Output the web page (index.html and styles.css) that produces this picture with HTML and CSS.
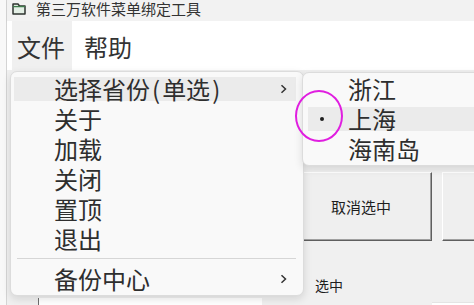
FILE: index.html
```html
<!DOCTYPE html>
<html lang="zh-CN">
<head>
  <meta charset="UTF-8" />
  <title>第三万软件菜单绑定工具</title>
  <link rel="stylesheet" href="styles.css">
</head>
<body>
  <div class="app">
    <header class="titlebar">
      <svg class="app-icon" viewBox="0 0 14 12" width="14" height="12">
        <path d="M1 1 H6 L7.5 3 H13 V11 H1 Z" fill="#e3efe5" stroke="#2f3430" stroke-width="1.5" stroke-linejoin="round" />
        <path d="M1 3.6 H13" stroke="#3f7a4c" stroke-width="1.3" />
      </svg>
      <span class="title">第三万软件菜单绑定工具</span>
    </header>

    <nav class="menubar">
      <span class="menu-item open">文件</span>
      <span class="menu-item">帮助</span>
    </nav>

    <main class="client">
      <div class="btn btn-clear">取消选中</div>
      <div class="btn btn-next"></div>
      <div class="label">选中</div>
      <div class="input input-left"></div>
      <div class="input input-right"></div>
    </main>
  </div>

  <!-- 文件 菜单 -->
  <div class="dropdown">
    <div class="item active">
      <span class="text">选择省份<span class="paren">(</span>单选<span class="paren">)</span></span>
      <svg class="chevron" viewBox="0 0 7 10" width="7" height="10"><path d="M1.5 1.2 L5.5 5 L1.5 8.8" /></svg>
    </div>
    <div class="item"><span class="text">关于</span></div>
    <div class="item"><span class="text">加载</span></div>
    <div class="item"><span class="text">关闭</span></div>
    <div class="item"><span class="text">置顶</span></div>
    <div class="item"><span class="text">退出</span></div>
    <div class="separator"></div>
    <div class="item">
      <span class="text">备份中心</span>
      <svg class="chevron" viewBox="0 0 7 10" width="7" height="10"><path d="M1.5 1.2 L5.5 5 L1.5 8.8" /></svg>
    </div>
  </div>

  <!-- 省份 子菜单 -->
  <div class="submenu">
    <div class="sub-item"><span class="check"></span><span class="text">浙江</span></div>
    <div class="sub-item active"><span class="check on"></span><span class="text">上海</span></div>
    <div class="sub-item"><span class="check"></span><span class="text">海南岛</span></div>
  </div>

  <div class="mark"></div>
</body>
</html>
```

FILE: styles.css
```css
:root {
  --menu-font: "Noto Sans CJK SC", "Noto Sans", sans-serif;
  --ui-font: "Noto Sans CJK SC", "Noto Sans", sans-serif;
  --text: #2e2e2e;
  --menu-bg: #f9f9f9;
  --menu-border: #dcdcdc;
  --hover: #ebebeb;
  --face: #f0f0f0;
}

* {
  box-sizing: border-box;
}

body {
  margin: 0;
  width: 474px;
  height: 305px;
  overflow: hidden;
  position: relative;
  background: #f8f8f8;
  color: var(--text);
  font-family: var(--ui-font);
}

.app {
  margin-left: 6px;
  height: 305px;
  border-left: 1px solid #d4d4d4;
  display: flex;
  flex-direction: column;
}

.titlebar {
  height: 21px;
  display: flex;
  align-items: flex-start;
  gap: 10px;
  padding: 1px 0 0 5px;
  background: #f2f2f2;
  box-shadow: 0 1px 2px rgba(0, 0, 0, 0.04);
}

.app-icon {
  margin-top: 2px;
  flex: none;
}

.title {
  font-size: 15px;
  line-height: 16px;
  color: #333;
  white-space: nowrap;
}

.menubar {
  height: 49px;
  display: flex;
  gap: 7px;
  padding-left: 5px;
  background: #fff;
}

.menu-item {
  display: flex;
  align-items: center;
  padding: 3px 7px 0 5px;
  font-family: var(--menu-font);
  font-size: 24px;
  line-height: 26px;
  color: #333;
}

.menu-item.open {
  background: #f0f0f0;
}

.client {
  flex: 1;
  background: var(--face);
  display: grid;
  grid-template-columns: 31px 224px 28px 142px 10px 1fr;
  grid-template-rows: 69px 57px 1fr;
  padding-top: 102px;
}

.btn {
  grid-row: 1;
  background: #efefef;
  border: 1px solid;
  border-color: #ffffff #5f5f5f #5f5f5f #ffffff;
  box-shadow: inset -1px -1px 0 #a0a0a0;
  display: flex;
  align-items: center;
  justify-content: center;
  font-size: 15px;
  color: #1e1e1e;
}

.btn-clear {
  grid-column: 4;
}

.btn-next {
  grid-column: 6;
  width: 140px;
}

.label {
  grid-column: 4;
  grid-row: 2;
  padding-left: 25px;
  margin-top: 36px;
  font-size: 14px;
  line-height: 16px;
  color: #1e1e1e;
}

.input {
  grid-row: 3;
  background: #fff;
}

.input-left {
  grid-column: 2;
  border-left: 1px solid #6e6e6e;
}

.input-right {
  grid-column: 5 / span 2;
  margin-top: 4px;
  border-top: 1px solid #e4e4e4;
}

/* menus */

.dropdown {
  position: absolute;
  left: 10px;
  top: 71px;
  width: 294px;
  padding: 2px 0 1px;
  background: var(--menu-bg);
  border: 1px solid var(--menu-border);
  border-radius: 7px;
  box-shadow: 0 3px 9px rgba(0, 0, 0, 0.12);
  font-family: var(--menu-font);
}

.item {
  height: 30px;
  margin: 0 7px 0 3px;
  padding: 0 9px 0 40px;
  display: flex;
  align-items: center;
  justify-content: space-between;
  font-size: 24px;
  color: var(--text);
}

.item.active,
.sub-item.active {
  background: linear-gradient(var(--hover), var(--hover)) center / 100% 24px no-repeat;
}

.text {
  display: inline-block;
  height: 24px;
  line-height: 24px;
  white-space: nowrap;
}

.paren {
  padding: 0 2px;
}

.chevron {
  fill: none;
  stroke: #333;
  stroke-width: 1.5;
}

.separator {
  height: 10px;
  margin: 0 7px 0 6px;
  background: linear-gradient(#d6d6d6, #d6d6d6) 0 4px / 100% 1px no-repeat;
}

.submenu {
  position: absolute;
  left: 302px;
  top: 72px;
  width: 220px;
  padding: 1px 0;
  background: var(--menu-bg);
  border: 1px solid var(--menu-border);
  border-radius: 7px;
  box-shadow: 0 3px 9px rgba(0, 0, 0, 0.12);
  font-family: var(--menu-font);
}

.sub-item {
  height: 30px;
  margin-left: 5px;
  display: flex;
  align-items: center;
  font-size: 24px;
  color: var(--text);
}

.check {
  width: 4px;
  height: 4px;
  margin-left: 12px;
  margin-right: 24px;
  border-radius: 50%;
}

.check.on {
  background: #1e1e1e;
}

.mark {
  position: absolute;
  left: 295px;
  top: 90px;
  width: 48px;
  height: 52px;
  border: 2px solid #e01ee0;
  border-radius: 50%;
}
```
